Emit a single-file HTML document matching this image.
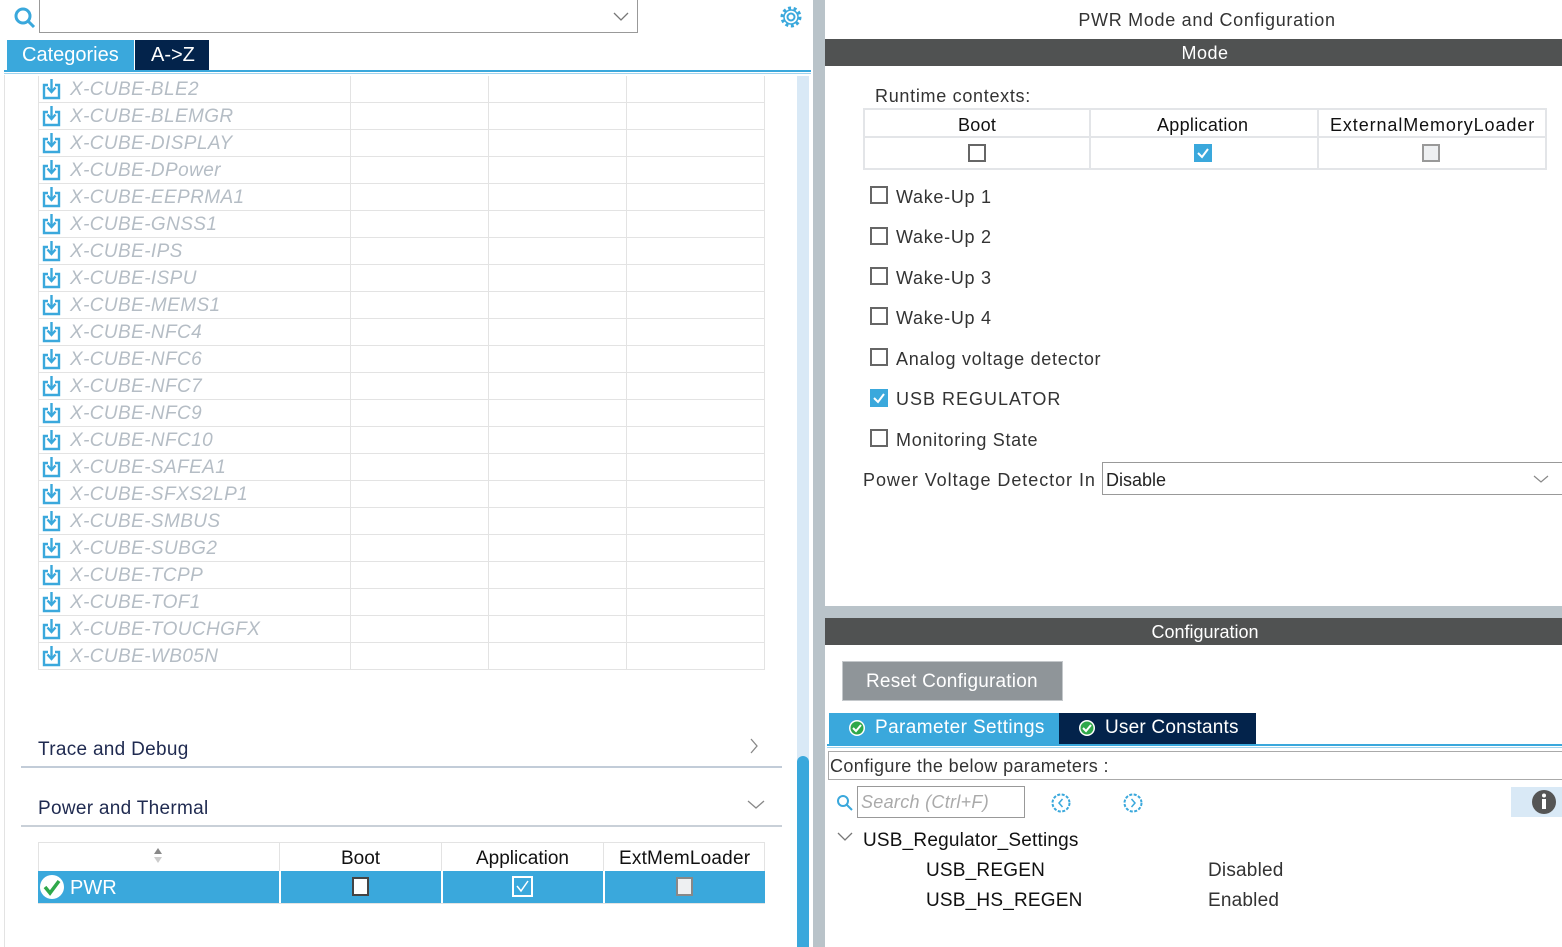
<!DOCTYPE html>
<html><head><meta charset="utf-8"><style>
*{margin:0;padding:0;box-sizing:border-box}
body{width:1562px;height:947px;position:relative;overflow:hidden;background:#fff;font-family:"Liberation Sans",sans-serif;color:#333}
.a{position:absolute}
.t{position:absolute;white-space:nowrap}
.cb{position:absolute;width:18px;height:18px;border:2px solid #666;background:#fff}
.row{position:absolute;left:38px;width:727px;height:27px;border-bottom:1px solid #e3e3e3}
.row span{position:absolute;left:32px;top:3px;font-size:19px;font-style:italic;color:#b5bdc5;letter-spacing:0.4px}
.ic{position:absolute;left:4px;top:3px;width:19px;height:21px}
.vl{position:absolute;top:76px;height:594px;width:1px;background:#e3e3e3}
.r{font-size:18px;letter-spacing:0.7px}
</style></head><body>
<svg class="a" style="left:13px;top:6px" width="24" height="22" viewBox="0 0 24 22"><circle cx="10" cy="10" r="7" fill="none" stroke="#3aa8dc" stroke-width="3"/><line x1="15" y1="15" x2="21" y2="21" stroke="#3aa8dc" stroke-width="3"/></svg>
<div class="a" style="left:39px;top:0;width:599px;height:33px;border:1px solid #999;border-top:none"></div>
<svg class="a" style="left:613px;top:12px" width="16" height="10"><polyline points="1,1 8,8 15,1" fill="none" stroke="#777" stroke-width="1.3"/></svg>
<svg class="a" style="left:778px;top:4px" width="26" height="26" viewBox="0 0 26 26"><circle cx="13" cy="13" r="9" fill="none" stroke="#3aa8dc" stroke-width="3" stroke-dasharray="3 2.6"/><circle cx="13" cy="13" r="7" fill="none" stroke="#3aa8dc" stroke-width="1.5"/><circle cx="13" cy="13" r="3.5" fill="none" stroke="#3aa8dc" stroke-width="2"/></svg>
<div class="a" style="left:7px;top:40px;width:127px;height:30px;background:#3aa8dc"></div>
<div class="t" style="left:22px;top:44px;font-size:20px;color:#fff">Categories</div>
<div class="a" style="left:135px;top:40px;width:74px;height:30px;background:#03234b"></div>
<div class="t" style="left:151px;top:44px;font-size:20px;color:#fff">A-&gt;Z</div>
<div class="a" style="left:4px;top:70px;width:807px;height:2px;background:#3aa8dc"></div>
<div class="a" style="left:4px;top:73px;width:807px;height:1px;background:#9fd3ee"></div>
<div class="a" style="left:4px;top:75px;width:1px;height:872px;background:#e3e3e3"></div>
<div class="a" style="left:38px;top:76px;width:727px;height:594px;border:1px solid #e3e3e3;border-top:none"></div>
<div class="vl" style="left:350px"></div><div class="vl" style="left:488px"></div><div class="vl" style="left:626px"></div>
<div id="list"></div>
<script>
var n=["BLE2","BLEMGR","DISPLAY","DPower","EEPRMA1","GNSS1","IPS","ISPU","MEMS1","NFC4","NFC6","NFC7","NFC9","NFC10","SAFEA1","SFXS2LP1","SMBUS","SUBG2","TCPP","TOF1","TOUCHGFX","WB05N"];
var h="";n.forEach(function(s,i){h+='<div class="row" style="top:'+(76+i*27)+'px"><svg class="ic" viewBox="0 0 19 21"><path d="M6 6H2v13h15V6h-4" fill="none" stroke="#3aa8dc" stroke-width="2.4"/><line x1="9.5" y1="0" x2="9.5" y2="12" stroke="#3aa8dc" stroke-width="2.4"/><polyline points="5.5,8.5 9.5,13 13.5,8.5" fill="none" stroke="#3aa8dc" stroke-width="2.4"/></svg><span>X-CUBE-'+s+'</span></div>'});
document.getElementById("list").innerHTML=h;
</script>
<div class="t" style="left:38px;top:739px;font-size:19px;color:#1f2a50;letter-spacing:0.3px">Trace and Debug</div>
<svg class="a" style="left:749px;top:738px" width="10" height="16"><polyline points="2,1 8,8 2,15" fill="none" stroke="#888" stroke-width="1.3"/></svg>
<div class="a" style="left:21px;top:766px;width:761px;height:2px;background:#c2ccd8"></div>
<div class="t" style="left:38px;top:798px;font-size:19px;color:#1f2a50;letter-spacing:0.3px">Power and Thermal</div>
<svg class="a" style="left:747px;top:800px" width="18" height="10"><polyline points="1,1 9,8 17,1" fill="none" stroke="#888" stroke-width="1.3"/></svg>
<div class="a" style="left:21px;top:825px;width:761px;height:2px;background:#c9d0d8"></div>
<div class="a" style="left:38px;top:842px;width:727px;height:62px;border:1px solid #e3e3e3"></div>
<div class="a" style="left:279px;top:842px;width:1px;height:30px;background:#e3e3e3"></div>
<div class="a" style="left:441px;top:842px;width:1px;height:30px;background:#e3e3e3"></div>
<div class="a" style="left:603px;top:842px;width:1px;height:30px;background:#e3e3e3"></div>
<svg class="a" style="left:152px;top:847px" width="12" height="18"><polygon points="6,1 10,7 2,7" fill="#888"/><polygon points="6,16 10,10 2,10" fill="#ccc"/></svg>
<div class="t" style="left:341px;top:848px;font-size:19px;color:#111">Boot</div>
<div class="t" style="left:476px;top:848px;font-size:19px;color:#111">Application</div>
<div class="t" style="left:619px;top:848px;font-size:19px;color:#111;letter-spacing:0.2px">ExtMemLoader</div>
<div class="a" style="left:38px;top:871px;width:727px;height:32px;background:#3aa8dc"></div>
<div class="a" style="left:279px;top:871px;width:2px;height:32px;background:#fff"></div>
<div class="a" style="left:441px;top:871px;width:2px;height:32px;background:#fff"></div>
<div class="a" style="left:603px;top:871px;width:2px;height:32px;background:#fff"></div>
<svg class="a" style="left:39px;top:874px" width="26" height="26"><circle cx="13" cy="13" r="12" fill="#fff"/><polyline points="6,13 11,19 20,7" fill="none" stroke="#2fa84a" stroke-width="3.5"/></svg>
<div class="t" style="left:70px;top:877px;font-size:20px;color:#fff">PWR</div>
<div class="a" style="left:352px;top:877px;width:17px;height:19px;background:#fff;border:2px solid #444"></div>
<div class="a" style="left:512px;top:876px;width:21px;height:21px;border:2px solid #fff"></div>
<svg class="a" style="left:514px;top:878px" width="17" height="17"><polyline points="3,8 7,13 14,3" fill="none" stroke="#fff" stroke-width="1.5"/></svg>
<div class="a" style="left:676px;top:877px;width:17px;height:19px;background:#eef0f2;border:2px solid #888"></div>
<div class="a" style="left:797px;top:76px;width:12px;height:871px;background:#d9e9f6"></div>
<div class="a" style="left:797px;top:756px;width:12px;height:191px;background:#3aa8dc;border-radius:6px 6px 0 0"></div>
<div class="a" style="left:813px;top:0;width:12px;height:947px;background:#b9c3c9"></div>
<div class="t r" style="left:825px;width:764px;text-align:center;top:10px;color:#333">PWR Mode and Configuration</div>
<div class="a" style="left:825px;top:39px;width:737px;height:27px;background:#505252"></div>
<div class="t" style="left:825px;width:760px;text-align:center;top:43px;font-size:18px;color:#fff;letter-spacing:0.5px">Mode</div>
<div class="t r" style="left:875px;top:86px;color:#333">Runtime contexts:</div>
<div class="a" style="left:863px;top:108px;width:684px;height:62px;border:2px solid #e3e5e8"></div>
<div class="a" style="left:863px;top:136px;width:684px;height:2px;background:#e3e5e8"></div>
<div class="a" style="left:1089px;top:108px;width:2px;height:62px;background:#e3e5e8"></div>
<div class="a" style="left:1317px;top:108px;width:2px;height:62px;background:#e3e5e8"></div>
<div class="t" style="left:958px;top:115px;font-size:18px;color:#111;letter-spacing:0.3px">Boot</div>
<div class="t" style="left:1157px;top:115px;font-size:18px;color:#111;letter-spacing:0.3px">Application</div>
<div class="t" style="left:1330px;top:115px;font-size:18px;color:#111;letter-spacing:0.9px">ExternalMemoryLoader</div>
<div class="cb" style="left:968px;top:144px"></div>
<div class="a" style="left:1194px;top:144px;width:18px;height:18px;background:#3aa8dc"></div>
<svg class="a" style="left:1195px;top:145px" width="16" height="16"><polyline points="3,8 7,12 13,4" fill="none" stroke="#fff" stroke-width="2"/></svg>
<div class="cb" style="left:1422px;top:144px;background:#eef0f2;border-color:#999"></div>
<div class="cb" style="left:870px;top:186px"></div><div class="t r" style="left:896px;top:187px">Wake-Up 1</div>
<div class="cb" style="left:870px;top:227px"></div><div class="t r" style="left:896px;top:227px">Wake-Up 2</div>
<div class="cb" style="left:870px;top:267px"></div><div class="t r" style="left:896px;top:268px">Wake-Up 3</div>
<div class="cb" style="left:870px;top:307px"></div><div class="t r" style="left:896px;top:308px">Wake-Up 4</div>
<div class="cb" style="left:870px;top:348px"></div><div class="t r" style="left:896px;top:349px">Analog voltage detector</div>
<div class="a" style="left:870px;top:389px;width:18px;height:18px;background:#3aa8dc"></div>
<svg class="a" style="left:871px;top:390px" width="16" height="16"><polyline points="3,8 7,12 13,4" fill="none" stroke="#fff" stroke-width="2"/></svg>
<div class="t" style="left:896px;top:389px;font-size:18px;letter-spacing:1px">USB REGULATOR</div>
<div class="cb" style="left:870px;top:429px"></div><div class="t r" style="left:896px;top:430px">Monitoring State</div>
<div class="t" style="left:863px;top:470px;font-size:18px;letter-spacing:0.95px">Power Voltage Detector In</div>
<div class="a" style="left:1102px;top:462px;width:460px;height:33px;border:1px solid #999;border-right:none"></div>
<div class="t" style="left:1106px;top:470px;font-size:18px;color:#222">Disable</div>
<svg class="a" style="left:1533px;top:475px" width="16" height="10"><polyline points="1,1 8,7 15,1" fill="none" stroke="#888" stroke-width="1.2"/></svg>
<div class="a" style="left:825px;top:606px;width:737px;height:12px;background:#b9c3c9"></div>
<div class="a" style="left:825px;top:618px;width:737px;height:27px;background:#505252"></div>
<div class="t" style="left:825px;width:760px;text-align:center;top:622px;font-size:18px;color:#fff">Configuration</div>
<div class="a" style="left:842px;top:661px;width:221px;height:40px;background:#8f9599;border:1px solid #c4c8cb"></div>
<div class="t" style="left:866px;top:671px;font-size:19px;color:#fff;letter-spacing:0.2px">Reset Configuration</div>
<div class="a" style="left:829px;top:713px;width:230px;height:31px;background:#3aa8dc"></div>
<div class="a" style="left:1059px;top:713px;width:197px;height:31px;background:#03234b"></div>
<svg class="a" style="left:848px;top:719px" width="18" height="18"><circle cx="9" cy="9" r="8" fill="#fff"/><circle cx="9" cy="9" r="6.5" fill="#2fa84a"/><polyline points="5,9 8,12 13,6" fill="none" stroke="#fff" stroke-width="2"/></svg>
<div class="t" style="left:875px;top:717px;font-size:19px;color:#fff;letter-spacing:0.4px">Parameter Settings</div>
<svg class="a" style="left:1078px;top:719px" width="18" height="18"><circle cx="9" cy="9" r="8" fill="#fff"/><circle cx="9" cy="9" r="6.5" fill="#2fa84a"/><polyline points="5,9 8,12 13,6" fill="none" stroke="#fff" stroke-width="2"/></svg>
<div class="t" style="left:1105px;top:717px;font-size:19px;color:#fff;letter-spacing:0.2px">User Constants</div>
<div class="a" style="left:827px;top:744px;width:735px;height:2px;background:#3aa8dc"></div>
<div class="a" style="left:827px;top:747px;width:735px;height:1px;background:#9fd3ee"></div>
<div class="a" style="left:828px;top:751px;width:734px;height:29px;border:1px solid #aaa;border-right:none"></div>
<div class="t" style="left:830px;top:756px;font-size:18px;color:#333;letter-spacing:0.4px">Configure the below parameters :</div>
<svg class="a" style="left:836px;top:794px" width="18" height="18"><circle cx="7" cy="7" r="5" fill="none" stroke="#3aa8dc" stroke-width="2"/><line x1="11" y1="11" x2="16" y2="16" stroke="#3aa8dc" stroke-width="2"/></svg>
<div class="a" style="left:857px;top:786px;width:168px;height:32px;border:1px solid #999"></div>
<div class="t" style="left:861px;top:792px;font-size:18px;font-style:italic;color:#aaa;letter-spacing:0.3px">Search (Ctrl+F)</div>
<svg class="a" style="left:1050px;top:792px" width="22" height="22"><circle cx="11" cy="11" r="8.5" fill="none" stroke="#3aa8dc" stroke-width="2" stroke-dasharray="3 1.5"/><polyline points="12.5,7 9,11 12.5,15" fill="none" stroke="#3aa8dc" stroke-width="1.5"/></svg>
<svg class="a" style="left:1122px;top:792px" width="22" height="22"><circle cx="11" cy="11" r="8.5" fill="none" stroke="#3aa8dc" stroke-width="2" stroke-dasharray="3 1.5"/><polyline points="9.5,7 13,11 9.5,15" fill="none" stroke="#3aa8dc" stroke-width="1.5"/></svg>
<div class="a" style="left:1511px;top:787px;width:51px;height:30px;background:#d9e9f6"></div>
<svg class="a" style="left:1530px;top:789px" width="28" height="26"><circle cx="14" cy="13" r="12" fill="#555"/><rect x="12" y="10" width="4" height="10" fill="#fff"/><circle cx="14" cy="6.5" r="2" fill="#fff"/></svg>
<svg class="a" style="left:837px;top:832px" width="16" height="10"><polyline points="1,1 8,8 15,1" fill="none" stroke="#777" stroke-width="1.3"/></svg>
<div class="t" style="left:863px;top:830px;font-size:19px;color:#111;letter-spacing:0.2px">USB_Regulator_Settings</div>
<div class="t" style="left:926px;top:860px;font-size:19px;color:#111;letter-spacing:0.2px">USB_REGEN</div>
<div class="t" style="left:1208px;top:860px;font-size:19px;color:#333;letter-spacing:0.2px">Disabled</div>
<div class="t" style="left:926px;top:890px;font-size:19px;color:#111;letter-spacing:0.2px">USB_HS_REGEN</div>
<div class="t" style="left:1208px;top:890px;font-size:19px;color:#333;letter-spacing:0.2px">Enabled</div>
</body></html>
